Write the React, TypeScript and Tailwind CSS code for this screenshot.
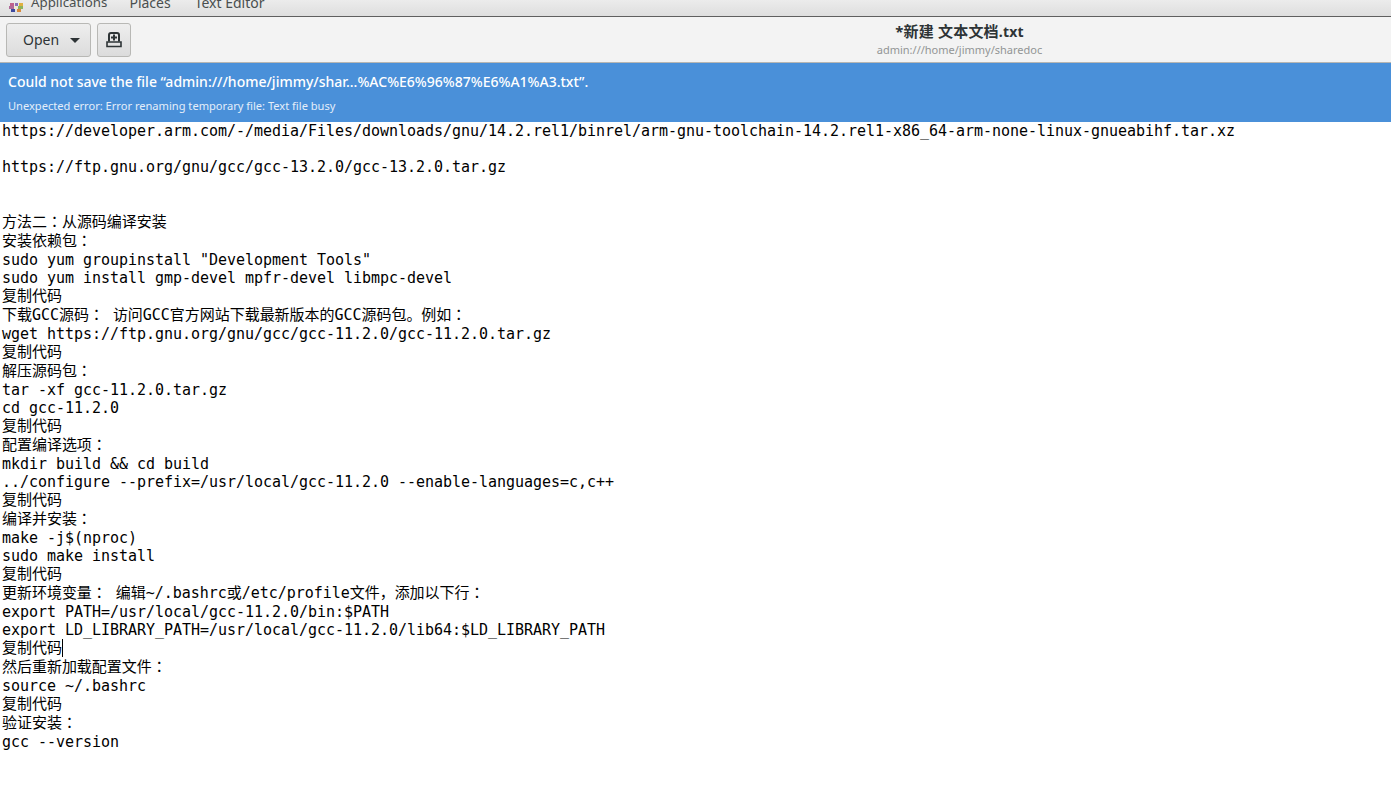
const lines = [
  "https://developer.arm.com/-/media/Files/downloads/gnu/14.2.rel1/binrel/arm-gnu-toolchain-14.2.rel1-x86_64-arm-none-linux-gnueabihf.tar.xz",
  "",
  "https://ftp.gnu.org/gnu/gcc/gcc-13.2.0/gcc-13.2.0.tar.gz",
  "",
  "",
  "方法二：从源码编译安装",
  "安装依赖包：",
  'sudo yum groupinstall "Development Tools"',
  "sudo yum install gmp-devel mpfr-devel libmpc-devel",
  "复制代码",
  "下载GCC源码： 访问GCC官方网站下载最新版本的GCC源码包。例如：",
  "wget https://ftp.gnu.org/gnu/gcc/gcc-11.2.0/gcc-11.2.0.tar.gz",
  "复制代码",
  "解压源码包：",
  "tar -xf gcc-11.2.0.tar.gz",
  "cd gcc-11.2.0",
  "复制代码",
  "配置编译选项：",
  "mkdir build && cd build",
  "../configure --prefix=/usr/local/gcc-11.2.0 --enable-languages=c,c++",
  "复制代码",
  "编译并安装：",
  "make -j$(nproc)",
  "sudo make install",
  "复制代码",
  "更新环境变量： 编辑~/.bashrc或/etc/profile文件，添加以下行：",
  "export PATH=/usr/local/gcc-11.2.0/bin:$PATH",
  "export LD_LIBRARY_PATH=/usr/local/gcc-11.2.0/lib64:$LD_LIBRARY_PATH",
  "复制代码",
  "然后重新加载配置文件：",
  "source ~/.bashrc",
  "复制代码",
  "验证安装：",
  "gcc --version",
];

const uiFont = "font-['Noto_Sans','Noto_Sans_CJK_SC',sans-serif]";

function GnomeFoot() {
  return (
    <svg width="14" height="9" viewBox="0 0 14 9" className="shrink-0">
      <rect x="1" y="0" width="4" height="3" fill="#c0608c" />
      <rect x="6" y="0" width="3" height="3" fill="#8a6fb5" />
      <rect x="10" y="0" width="4" height="3" fill="#e0b040" />
      <rect x="0" y="3" width="5" height="3" fill="#b06a9a" />
      <rect x="5" y="3" width="3" height="3" fill="#f3ead0" />
      <rect x="9" y="3" width="5" height="3" fill="#8fb35a" />
      <rect x="2" y="6" width="4" height="3" fill="#3f4a9e" />
      <rect x="8" y="6" width="4" height="3" fill="#d98a3c" />
    </svg>
  );
}

// the colon sits mid-cell in the reference, which only the TC cut does
function EditorLine({ text }: { text: string }) {
  const parts = text.split("：");
  return (
    <>
      {parts.map((part, i) => (
        <span key={i}>
          {part}
          {i < parts.length - 1 && <span className="font-['Noto_Sans_CJK_TC',monospace]">：</span>}
        </span>
      ))}
    </>
  );
}

function rowClass(line: string, i: number) {
  if (i === 5) return "h-[20px] whitespace-pre";
  if (line.includes("：")) return "h-[19px] whitespace-pre leading-[16px]";
  if (/[\u3000-\u9fff]/.test(line)) return "h-[19px] whitespace-pre";
  return "h-[18px] whitespace-pre";
}

export default function App() {
  return (
    <div className={`h-[793px] w-[1391px] overflow-hidden bg-white ${uiFont}`}>
      <div className="flex h-[17px] items-end overflow-hidden border-b border-[#5f5f5f] bg-gradient-to-b from-[#ececec] to-[#dedede] pb-[4px] pl-[9px] text-[14px] leading-[19px] text-[#4a4f4f]">
        <GnomeFoot />
        <span className="ml-[8px] text-[13.3px]">Applications</span>
        <span className="ml-[22px]">Places</span>
        <span className="ml-[24px]">Text Editor</span>
      </div>

      <div className="relative flex h-[46px] items-center gap-[6px] border-b border-[#b6b6b3] bg-[#f3f3f3] pl-[6px]">
        <button className="flex h-[34px] w-[85px] items-center rounded-[3px] border border-[#b8b8b5] bg-gradient-to-b from-[#eeeeee] to-[#dcdcdc] pl-[16px] text-[14px] text-[#2e3436]">
          Open
          <span className="ml-[11px] mt-[1px] h-0 w-0 border-x-[5px] border-t-[5px] border-x-transparent border-t-[#2e3436]" />
        </button>
        <button className="flex h-[34px] w-[34px] items-center justify-center rounded-[3px] border border-[#b8b8b5] bg-gradient-to-b from-[#eeeeee] to-[#dcdcdc]">
          <svg width="16" height="16" viewBox="0 0 16 16">
            <path d="M3 9.5V3q0-2 2-2h6q2 0 2 2v6.5" fill="none" stroke="#2e3436" strokeWidth="2" />
            <path d="M8 2.5v6M5 5.5h6" stroke="#2e3436" strokeWidth="2" />
            <path d="M1 10h14v4.5H1z" fill="none" stroke="#2e3436" strokeWidth="1.6" />
          </svg>
        </button>
        <div className="absolute left-[528px] right-0 top-[4px] flex flex-col items-center">
          <span className="text-[15px] font-bold leading-[20px] tracking-[0.2px] text-[#2e3436]">
            *新建 文本文档<span className="text-[14px]">.txt</span>
          </span>
          <span className="text-[11px] leading-[15px] text-[#929595]">admin:///home/jimmy/sharedoc</span>
        </div>
      </div>

      <div className="h-[59px] bg-[#4a90d9] pl-[8px] pt-[9px] text-white">
        <div className="text-[14px] font-medium leading-[20px]">
          Could not save the file “admin:///home/jimmy/shar...%AC%E6%96%87%E6%A1%A3.txt”.
        </div>
        <div className="mt-[6px] text-[11.1px] leading-[16px] text-[#e4eefa]">
          Unexpected error: Error renaming temporary file: Text file busy
        </div>
      </div>

      <div className="pl-[2px] font-['DejaVu_Sans_Mono','Noto_Sans_CJK_SC',monospace] text-[15px] leading-[18px] tracking-[-0.03px] text-black">
        {lines.map((line, i) => (
          <div key={i} className={rowClass(line, i)}>
            <EditorLine text={line} />
            {i === 28 && <span className="inline-block h-[18px] w-px bg-black align-top" />}
          </div>
        ))}
      </div>
    </div>
  );
}
